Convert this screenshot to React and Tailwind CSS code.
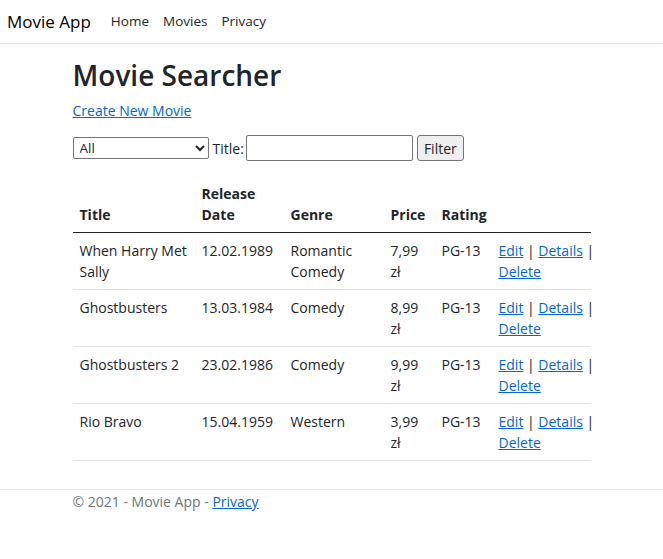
import { useState } from "react";

const movies = [
  { title: "When Harry Met Sally", date: "12.02.1989", genre: "Romantic Comedy", price: "7,99 zł", rating: "PG-13" },
  { title: "Ghostbusters", date: "13.03.1984", genre: "Comedy", price: "8,99 zł", rating: "PG-13" },
  { title: "Ghostbusters 2", date: "23.02.1986", genre: "Comedy", price: "9,99 zł", rating: "PG-13" },
  { title: "Rio Bravo", date: "15.04.1959", genre: "Western", price: "3,99 zł", rating: "PG-13" },
];

const font = { fontFamily: '"Open Sans", "Noto Sans", sans-serif' };

export default function App() {
  const [genre, setGenre] = useState("All");
  const [title, setTitle] = useState("");

  return (
    <div className="min-h-[559px] bg-white text-[14px] leading-[21px] text-[#212529]" style={font}>
      {/* ================= NAVBAR ================= */}
      <nav className="h-[44px] flex items-center border-b border-[#e5e5e5] shadow-[0_2px_4px_rgba(0,0,0,0.03)] px-[7px]">
        <a className="text-[17px] text-black mr-[13px] leading-[26px]">Movie App</a>
        <a className="px-[7px] text-[13.5px] text-[#212529]">Home</a>
        <a className="px-[7px] text-[13.5px] text-[#212529]">Movies</a>
        <a className="px-[7px] text-[13.5px] text-[#212529]">Privacy</a>
      </nav>

      {/* ================= MAIN ================= */}
      <main className="w-[518px] mx-auto pt-[14px]">
        <h1 className="text-[28px] leading-[35px] font-semibold mb-[7px]">Movie Searcher</h1>
        <p className="mb-[14px]">
          <a href="#" className="text-[#0366d6] underline">Create New Movie</a>
        </p>

        <form className="flex items-center h-[26px] mb-[15px]" onSubmit={(e) => e.preventDefault()}>
          <select
            value={genre}
            onChange={(e) => setGenre(e.target.value)}
            className="w-[136px] h-[22px] border border-[#767676] rounded-[2px] text-[13.5px] pl-[2px] bg-white"
          >
            <option>All</option>
            <option>Comedy</option>
            <option>Romantic Comedy</option>
            <option>Western</option>
          </select>
          <span className="ml-[4px] mr-[2px]">Title:</span>
          <input
            value={title}
            onChange={(e) => setTitle(e.target.value)}
            className="w-[167px] h-[26px] border border-[#767676] rounded-[2px] px-[2px]"
          />
          <button className="ml-[4px] w-[47px] h-[26px] border border-[#767676] rounded-[3px] bg-[#efefef] text-[14px]">
            Filter
          </button>
        </form>

        {/* ================= TABLE ================= */}
        <table className="w-full border-collapse table-fixed mb-[28px]">
          <colgroup>
            <col className="w-[122px]" />
            <col className="w-[89px]" />
            <col className="w-[100px]" />
            <col className="w-[51px]" />
            <col className="w-[57px]" />
            <col className="w-[99px]" />
          </colgroup>
          <thead>
            <tr className="border-b border-[#212529]">
              <th className="text-left align-bottom font-bold p-[7px]">Title</th>
              <th className="text-left align-bottom font-bold p-[7px]">Release Date</th>
              <th className="text-left align-bottom font-bold p-[7px]">Genre</th>
              <th className="text-left align-bottom font-bold p-[7px]">Price</th>
              <th className="text-left align-bottom font-bold p-[7px]">Rating</th>
              <th className="p-[7px]"></th>
            </tr>
          </thead>
          <tbody>
            {movies.map((m, i) => (
              <tr key={i} className="border-b border-[#dee2e6]">
                <td className="align-top p-[7px]">{m.title}</td>
                <td className="align-top p-[7px]">{m.date}</td>
                <td className="align-top p-[7px]">{m.genre}</td>
                <td className="align-top p-[7px]">{m.price}</td>
                <td className="align-top p-[7px]">{m.rating}</td>
                <td className="align-top p-[7px]">
                  <span className="whitespace-nowrap">
                    <a href="#" className="text-[#0366d6] underline">Edit</a> |{" "}
                    <a href="#" className="text-[#0366d6] underline">Details</a> |
                  </span>{" "}
                  <a href="#" className="text-[#0366d6] underline">Delete</a>
                </td>
              </tr>
            ))}
          </tbody>
        </table>
      </main>

      {/* ================= FOOTER ================= */}
      <footer className="border-t border-[#e5e5e5] pt-[1px]">
        <div className="w-[518px] mx-auto text-[#6c757d]">
          © 2021 - Movie App - <a href="#" className="text-[#0366d6] underline">Privacy</a>
        </div>
      </footer>
    </div>
  );
}
